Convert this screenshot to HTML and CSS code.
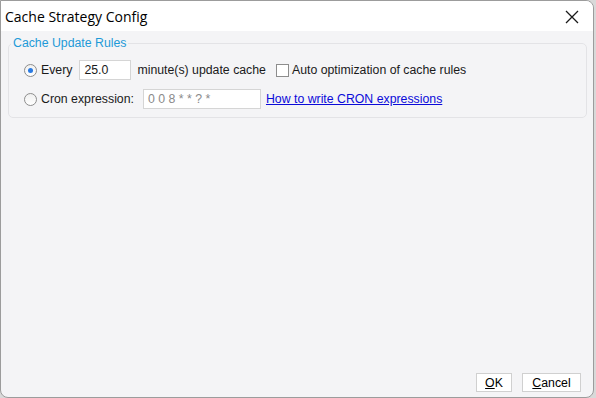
FILE: index.html
```html
<!DOCTYPE html>
<html>
<head>
<meta charset="utf-8">
<link rel="stylesheet" href="styles.css">
</head>
<body>
<div class="window">
  <div class="titlebar">
    <span class="title">Cache Strategy Config</span>
    <span class="close">
      <svg width="14" height="14" viewBox="0 0 14 14"><path d="M1 1L13 13M13 1L1 13" stroke="#1a1a1a" stroke-width="1.3" fill="none"/></svg>
    </span>
  </div>
  <div class="content">
    <fieldset class="group">
      <legend class="legend">Cache Update Rules</legend>
      <div class="row row1">
        <span class="radio checked"><span class="dot"></span></span>
        <span class="lbl every">Every</span>
        <span class="input num">25.0</span>
        <span class="lbl">minute(s) update cache</span>
        <span class="check"></span>
        <span class="lbl">Auto optimization of cache rules</span>
      </div>
      <div class="row row2">
        <span class="radio"></span>
        <span class="lbl cron">Cron expression:</span>
        <span class="input cronin">0 0 8 * * ? *</span>
        <a class="link" href="#">How to write CRON expressions</a>
      </div>
    </fieldset>
    <div class="spacer"></div>
    <div class="buttons">
      <span class="btn ok"><u>O</u>K</span>
      <span class="btn cancel"><u>C</u>ancel</span>
    </div>
  </div>
</div>
</body>
</html>
```
FILE: styles.css
```css
html, body {
  margin: 0;
  padding: 0;
  background: #d9d9d9;
  width: 596px;
  height: 398px;
  overflow: hidden;
}
.window {
  box-sizing: border-box;
  width: 594px;
  height: 398px;
  border: 1px solid #9c9c9c;
  border-radius: 0 8px 8px 8px;
  background: #f4f4f6;
  display: flex;
  flex-direction: column;
  overflow: hidden;
  font-family: "Liberation Sans", Arial, sans-serif;
  font-size: 12.3px;
  color: #1a1a1a;
}
.titlebar {
  height: 30px;
  background: #ffffff;
  display: flex;
  align-items: center;
  justify-content: space-between;
  padding: 0 14px 0 4px;
  flex: none;
}
.title {
  font-family: "Open Sans", "Noto Sans", sans-serif;
  font-size: 14px;
  color: #000;
  margin-top: 1px;
}
.close {
  display: flex;
  margin-top: 2px;
}
.content {
  flex: 1;
  display: flex;
  flex-direction: column;
  padding: 5px 6px 5px 7px;
}
.group {
  margin: 0;
  border: 1px solid #e3e3e6;
  border-radius: 5px;
  padding: 0 0 6px 15px;
  height: 82px;
  box-sizing: border-box;
}
.legend {
  color: #1e9ad8;
  font-size: 12.3px;
  padding: 0 2px;
  margin-left: -13px;
  line-height: 14px;
}
.row {
  display: flex;
  align-items: center;
  height: 20px;
}
.row1 { margin-top: 10px; }
.row2 { margin-top: 9px; }
.radio {
  box-sizing: border-box;
  width: 13px;
  height: 13px;
  border: 1px solid #8d8d8d;
  border-radius: 50%;
  background: linear-gradient(#f0f0f0, #ffffff);
  display: flex;
  align-items: center;
  justify-content: center;
  margin-right: 4px;
}
.dot {
  width: 5px;
  height: 5px;
  border-radius: 50%;
  background: #2a7ae2;
}
.lbl { white-space: nowrap; }
.every { margin-right: 7px; }
.cron { margin-right: 9px; }
.input {
  box-sizing: border-box;
  height: 20px;
  background: #fff;
  border: 1px solid #d5d5d5;
  display: flex;
  align-items: center;
  padding-left: 4px;
}
.num {
  width: 52px;
  margin-right: 6px;
}
.cronin {
  width: 118px;
  color: #8a8a8a;
  margin-right: 5px;
}
.check {
  box-sizing: border-box;
  width: 13px;
  height: 13px;
  border: 1px solid #8d8d8d;
  background: #fff;
  margin-left: 10px;
  margin-right: 3px;
}
.link {
  color: #0b0bd9;
  text-decoration: underline;
}
.spacer { flex: 1; }
.buttons {
  display: flex;
  justify-content: flex-end;
  gap: 10px;
  padding-right: 6px;
}
.btn {
  box-sizing: border-box;
  height: 19px;
  background: #fff;
  border: 1px solid #d0d0d0;
  display: flex;
  align-items: center;
  justify-content: center;
  color: #000;
}
.ok { width: 36px; }
.cancel { width: 59px; }
```
